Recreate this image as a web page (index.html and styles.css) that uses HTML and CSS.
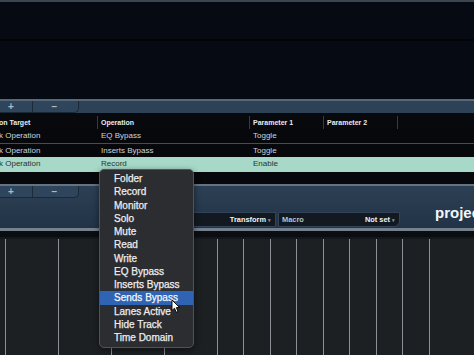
FILE: index.html
```html
<!DOCTYPE html>
<html>
<head>
<meta charset="utf-8">
<link rel="stylesheet" href="styles.css">
</head>
<body>
<div class="screen">
  <div class="top-line"></div>
  <div class="dark-area"><div class="dark-rule"></div></div>

  <div class="bar">
    <div class="btngroup">
      <span class="btn plus">+</span>
      <span class="btn minus">−</span>
    </div>
  </div>
  <div class="gap"></div>

  <div class="table">
    <div class="row head">
      <div class="cell c1">on Target</div>
      <div class="cell c2">Operation</div>
      <div class="cell c3">Parameter 1</div>
      <div class="cell c4">Parameter 2</div>
      <div class="cell c5"></div>
    </div>
    <div class="row r1">
      <div class="cell c1">k Operation</div>
      <div class="cell c2">EQ Bypass</div>
      <div class="cell c3">Toggle</div>
      <div class="cell c4"></div>
    </div>
    <div class="rowline"></div>
    <div class="row r2">
      <div class="cell c1">k Operation</div>
      <div class="cell c2">Inserts Bypass</div>
      <div class="cell c3">Toggle</div>
      <div class="cell c4"></div>
    </div>
    <div class="row r3 selected">
      <div class="cell c1">k Operation</div>
      <div class="cell c2">Record</div>
      <div class="cell c3">Enable</div>
      <div class="cell c4"></div>
    </div>
    <div class="row r4"></div>
  </div>

  <div class="panel-line"></div>
  <div class="panel">
    <div class="btngroup">
      <span class="btn plus">+</span>
      <span class="btn minus">−</span>
    </div>
    <div class="fields">
      <div class="field transform"><span class="fval">Transform</span><span class="arrow">▾</span></div>
      <div class="field macro"><span class="flabel">Macro</span><span class="fval">Not set</span><span class="arrow">▾</span></div>
      <div class="brand">project</div>
    </div>
  </div>
  <div class="panel-bottom"></div>
  <div class="dark-strip"></div>
  <div class="grid"></div>

  <div class="menu">
    <div class="item">Folder</div>
    <div class="item">Record</div>
    <div class="item">Monitor</div>
    <div class="item">Solo</div>
    <div class="item">Mute</div>
    <div class="item">Read</div>
    <div class="item">Write</div>
    <div class="item">EQ Bypass</div>
    <div class="item">Inserts Bypass</div>
    <div class="item active">Sends Bypass</div>
    <div class="item">Lanes Active</div>
    <div class="item">Hide Track</div>
    <div class="item">Time Domain</div>
  </div>

  <svg class="cursor" width="10" height="15" viewBox="0 0 10 15">
    <path d="M1 1 L1 11.5 L3.5 9.2 L5.3 13.3 L7 12.5 L5.3 8.6 L8.6 8.6 Z" fill="#ffffff" stroke="#000000" stroke-width="0.9" stroke-linejoin="round"/>
  </svg>
</div>
</body>
</html>
```

FILE: styles.css
```css
* { box-sizing: border-box; }
html, body { margin: 0; padding: 0; }
body {
  width: 474px;
  height: 355px;
  overflow: hidden;
  background: #050a13;
  font-family: "Liberation Sans", Arial, sans-serif;
}
.screen {
  position: relative;
  width: 474px;
  height: 355px;
  overflow: hidden;
  display: flex;
  flex-direction: column;
}
.top-line { height: 2px; background: #3b4651; flex: none; }
.dark-area {
  height: 97px;
  flex: none;
  background: #050a13;
  padding-top: 37px;
}
.dark-rule { height: 2px; background: #020408; }

.bar {
  height: 14px;
  flex: none;
  border-top: 2px solid #56687a;
  background: #2d4257;
}
.btngroup {
  width: 79px;
  height: 12px;
  display: flex;
  border-right: 1px solid #1b2836;
  border-bottom: 1px solid #1b2836;
  border-bottom-right-radius: 5px;
  background: #2f455b;
}
.btn {
  height: 11px;
  display: flex;
  align-items: center;
  justify-content: center;
  color: #aeb9c4;
  font-size: 10px;
  font-weight: bold;
  line-height: 11px;
}
.btn.plus { width: 33px; border-right: 1px solid #1d2a38; padding-left: 8px; justify-content: flex-start; }
.btn.minus { flex: 1; padding-right: 2px; }

.gap { height: 3px; flex: none; background: #06090d; }

.table { flex: none; background: #06080c; }
.row { display: flex; }
.cell {
  flex: none;
  white-space: nowrap;
  overflow: hidden;
  padding-left: 4px;
  color: #cfd5da;
  font-size: 8px;
}
.c1 { width: 97px; padding-left: 0; text-indent: -1px; }
.c2 { width: 152px; }
.c3 { width: 74px; }
.c4 { width: 74px; }
.c5 { flex: 1; }
.head { height: 13px; background: #07090c; }
.head .cell {
  font-size: 7px;
  font-weight: bold;
  color: #e8ecf0;
  line-height: 13px;
}
.head .c2, .head .c3, .head .c4, .head .c5 { border-left: 1px solid #353b43; padding-left: 3px; }
.r1 { height: 14px; }
.r1 .cell { line-height: 13px; }
.rowline { height: 1px; background: #464c54; }
.r2 { height: 13px; }
.r2 .cell { line-height: 13px; }
.r3 { height: 15px; }
.r3 .cell { line-height: 14px; }
.selected { background: #a8d8c8; }
.selected .cell { color: #25352f; }
.r4 { height: 12px; }

.panel-line { height: 2px; flex: none; background: #66727e; }
.panel {
  height: 42px;
  flex: none;
  background: linear-gradient(#2c4055, #223346);
}
.fields {
  margin-top: 14px;
  height: 15px;
  display: flex;
  padding-left: 110px;
  gap: 2px;
}
.field {
  flex: none;
  height: 15px;
  display: flex;
  align-items: center;
  background: #121920;
  border: 1px solid #33445a;
  font-size: 7.4px;
  font-weight: bold;
  color: #f0f3f6;
  white-space: nowrap;
}
.transform { width: 166px; justify-content: flex-end; padding-right: 4px; }
.macro {
  width: 122px;
  padding-left: 3px;
  padding-right: 4px;
  border-bottom-right-radius: 6px;
}
.flabel { color: #b9c3cd; flex: 1; }
.arrow { font-size: 5px; color: #8794a2; margin-left: 2px; }
.brand {
  flex: none;
  margin-left: 33px;
  font-size: 15px;
  font-weight: bold;
  color: #f4f6f8;
  line-height: 15px;
  margin-top: -7px;
  white-space: nowrap;
}

.panel-bottom { height: 3px; flex: none; background: #75818d; }
.dark-strip { height: 6px; flex: none; background: #0a0d11; }
.grid {
  flex: 1;
  background-color: #1d2023;
  background-image: repeating-linear-gradient(to right, transparent 0, transparent 5px, #8b9197 5px, #8b9197 6px, transparent 6px, transparent 26.5px);
  border-top: 2px solid #15181b;
}

.menu {
  position: absolute;
  left: 99px;
  top: 169px;
  width: 95px;
  height: 179px;
  background: #2b2d31;
  border: 1px solid #505357;
  border-radius: 5px;
  box-shadow: 0 2px 6px rgba(0,0,0,0.5);
  padding-top: 2px;
}
.item {
  height: 13.25px;
  line-height: 13.25px;
  padding-left: 14px;
  font-size: 10px;
  color: #eeeeee;
  -webkit-text-stroke: 0.25px #eeeeee;
  white-space: nowrap;
}
.item.active { background: #2f63b3; color: #ffffff; }
.cursor {
  position: absolute;
  left: 171px;
  top: 299px;
}
```
